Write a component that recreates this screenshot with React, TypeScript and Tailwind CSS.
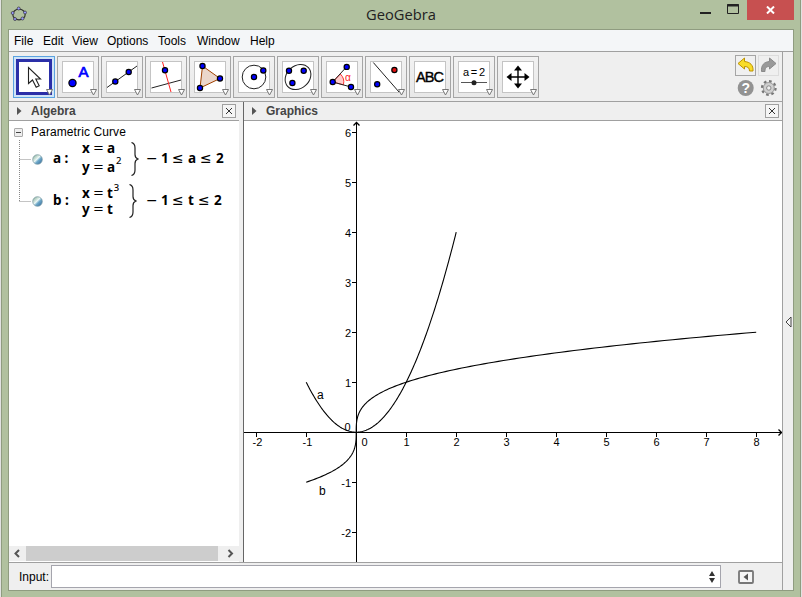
import type { ReactNode } from "react";

const menus = [
  { label: "File", width: "w-[29px]" },
  { label: "Edit", width: "w-[29px]" },
  { label: "View", width: "w-[35px]" },
  { label: "Options", width: "w-[51px]" },
  { label: "Tools", width: "w-[39px]" },
  { label: "Window", width: "w-[53px]" },
  { label: "Help", width: "w-[30px]" },
];

function Dot({ x, y, r = 2.6, fill = "#0000ff" }: { x: number; y: number; r?: number; fill?: string }) {
  return <circle cx={x} cy={y} r={r} fill={fill} stroke="#000" strokeWidth={1.2} />;
}

const tools: { name: string; icon: ReactNode }[] = [
  {
    name: "Move",
    icon: <path d="M15.5 11.5v16l4-3.5 3.7 7.2 3-1.5-3.4-6.7h4.7z" fill="#fff" stroke="#222" strokeWidth={1.1} />,
  },
  {
    name: "Point",
    icon: (
      <>
        <Dot x={15.5} y={27} r={3.6} />
        <text x={21.5} y={21} fontSize={15} fill="#0000ff" stroke="#0000ff" strokeWidth={0.7}>A</text>
      </>
    ),
  },
  {
    name: "Line",
    icon: (
      <>
        <path d="M6 31.500L36 10" stroke="#222" />
        <Dot x={14.3} y={25.5} />
        <Dot x={27.7} y={16} />
      </>
    ),
  },
  {
    name: "Perpendicular",
    icon: (
      <>
        <path d="M6.500 32L36 24" stroke="#222" />
        <path d="M17.500 6L26 36" stroke="#f22" />
        <Dot x={20} y={14.3} />
      </>
    ),
  },
  {
    name: "Polygon",
    icon: (
      <>
        <path d="M13.500 10L31 22.500L11 32z" fill="#ebd6cb" stroke="#a04000" />
        <Dot x={13.5} y={10} />
        <Dot x={31} y={22.5} />
        <Dot x={11} y={32} />
      </>
    ),
  },
  {
    name: "Circle",
    icon: (
      <>
        <circle cx={21} cy={21} r={11.8} fill="none" stroke="#222" />
        <Dot x={21} y={21} />
        <Dot x={30.3} y={14.5} />
      </>
    ),
  },
  {
    name: "Conic",
    icon: (
      <>
        <ellipse cx={21} cy={21} rx={14} ry={11.3} fill="none" stroke="#222" transform="rotate(-42 21 21)" />
        <Dot x={12} y={14.7} />
        <Dot x={26.7} y={14.7} />
        <Dot x={15.4} y={27} />
      </>
    ),
  },
  {
    name: "Angle",
    icon: (
      <>
        <path d="M11.700 26L19.300 18A11 11 0 0 1 22.400 28.800z" fill="#fcc" stroke="#f33" />
        <path d="M25.700 10.700L11.700 26L30 31" fill="none" stroke="#222" />
        <text x={24} y={24.5} fontSize={10} fill="#f22">α</text>
        <Dot x={11.7} y={26} />
        <Dot x={25.7} y={10.9} />
        <Dot x={30} y={31} />
      </>
    ),
  },
  {
    name: "Reflect",
    icon: (
      <>
        <path d="M8.300 6.500L34 36" stroke="#222" />
        <Dot x={29.4} y={14} fill="#e01010" />
        <Dot x={12.2} y={28.3} />
      </>
    ),
  },
  {
    name: "Text",
    icon: <text x={7} y={26} fontSize={14.5} textLength={28} stroke="#000" strokeWidth={0.4}>ABC</text>,
  },
  {
    name: "Slider",
    icon: (
      <>
        <text x={10} y={20} fontSize={11} textLength={22}>a=2</text>
        <path d="M8 26.500H34" stroke="#555" />
        <circle cx={21} cy={26.8} r={2.5} fill="#222" />
      </>
    ),
  },
  {
    name: "Move view",
    icon: (
      <>
        <path d="M21 13V29M13 21H29" stroke="#000" strokeWidth={1.4} />
        <path d="M21 9.500l4 5h-8zM21 32.500l4-5h-8zM9.500 21l5-4v8zM32.500 21l-5-4v8z" />
      </>
    ),
  },
];

function ToolButton({ icon, active }: { icon: ReactNode; active: boolean }) {
  return (
    <button
      className={
        active
          ? "h-[42px] w-[42px] border border-[#5ba3e0] bg-[#cfe4f8]"
          : "h-[42px] w-[42px] border border-[#a5a5a5] bg-linear-to-b from-[#f2f2f2] to-[#e8e8e8]"
      }
    >
      <svg width={42} height={42} viewBox="0 0 42 42" className="-m-px block font-['Liberation_Sans',sans-serif]">
        {active ? (
          <rect x={4.5} y={4.5} width={33} height={33} fill="#fff" stroke="#2b2fa8" strokeWidth={3} />
        ) : (
          <rect x={5.5} y={5.5} width={31} height={31} fill="#fff" stroke="#c4c4c4" />
        )}
        {icon}
        <path d="M33.500 33.500h6l-3 5.500z" fill="#fff" stroke="#777" />
      </svg>
    </button>
  );
}

function PanelHeader({ title }: { title: string }) {
  return (
    <div className="flex h-[19px] shrink-0 items-center border-b border-[#a0a0a0] bg-[#efefef] pr-[3px] pl-2">
      <svg width={5} height={8} viewBox="0 0 5 8">
        <path d="M0 0l4.500 4L0 8z" fill="#555" />
      </svg>
      <span className="ml-[9px] flex-1 text-[12px] leading-[18px] font-bold text-[#444]">{title}</span>
      <button className="grid h-3.5 w-3.5 place-items-center border border-[#a0a0a0] bg-[#f5f5f5]">
        <svg width={6} height={6} viewBox="0 0 6 6">
          <path d="M0 0l6 6M6 0L0 6" stroke="#333" />
        </svg>
      </button>
    </div>
  );
}

function Brace() {
  return (
    <svg width={8} height={34} viewBox="0 0 8 34" className="shrink-0">
      <path d="M0.500 0.500Q4 1.500 4 6v6.500Q4 16 7 17Q4 18 4 21.500V28Q4 32.500 0.500 33.500" fill="none" stroke="#222" strokeWidth={1.2} />
    </svg>
  );
}

function Marble() {
  return (
    <svg width={11} height={11} viewBox="0 0 11 11" className="shrink-0">
      <defs>
        <linearGradient id="marble" x1="0" y1="0" x2="1" y2="1">
          <stop offset="0.1" stopColor="#8fb5a0" />
          <stop offset="0.45" stopColor="#eaf6f4" />
          <stop offset="0.6" stopColor="#6fa9c9" />
          <stop offset="1" stopColor="#2a5f96" />
        </linearGradient>
      </defs>
      <circle cx={5.5} cy={5.5} r={4.8} fill="url(#marble)" stroke="#7797a0" strokeWidth={0.7} />
    </svg>
  );
}

function Equation({ left, right, power }: { left: string; right: string; power?: string }) {
  return (
    <span className="flex h-full items-center">
      <span className="w-[11px]">{left}</span>
      <span className="w-[14px] font-['DejaVu_Sans',sans-serif] text-[13px] font-normal">=</span>
      <span>{right}</span>
      {power && <span className="mb-[11px] ml-px text-[9.500px] font-medium">{power}</span>}
    </span>
  );
}

function Range({ name }: { name: string }) {
  const sign = "font-['DejaVu_Sans',sans-serif] text-[14px] font-normal";
  return (
    <span className="flex items-center leading-4">
      <span className={`${sign} w-[15px]`}>−</span>
      <span className="w-[11px]">1</span>
      <span className={`${sign} w-4`}>≤</span>
      <span className={name === "a" ? "w-[12px]" : "w-[10px]"}>{name}</span>
      <span className={`${sign} w-4`}>≤</span>
      <span>2</span>
    </span>
  );
}

function AlgebraPanel() {
  return (
    <section className="flex w-[230px] flex-col bg-white">
      <PanelHeader title="Algebra" />
      <div className="flex-1 pt-[3px] pl-[5px]">
        <div className="flex h-4 items-center">
          <span className="grid h-[9px] w-[9px] place-items-center rounded-[1px] border border-[#aaa] bg-[#eee]">
            <span className="h-px w-[5px] bg-[#444]" />
          </span>
          <span className="ml-2 text-[12px] leading-4 tracking-[0.1px]">Parametric Curve</span>
        </div>
        <div className="flex font-['Noto_Sans',sans-serif] text-[13.500px] leading-4 font-bold">
          <svg width={13} height={70} viewBox="0 0 13 70" className="ml-[5px] shrink-0">
            <path d="M0.500 0V61.500M0.500 19.500H12M0.500 61.500H12" fill="none" stroke="#888" strokeDasharray="1 1" />
          </svg>
          <div>
            <div className="flex h-[37px] items-center pt-px">
              <Marble />
              <span className="ml-[10px] w-[29px] pb-[3px] whitespace-nowrap">a :</span>
              <div className="grid w-[49px] grid-rows-[19px_19px] pb-1">
                <Equation left="x" right="a" />
                <Equation left="y" right="a" power="2" />
              </div>
              <Brace />
              <div className="ml-[7px] pb-[3px]">
                <Range name="a" />
              </div>
            </div>
            <div className="mt-[5px] flex h-[37px] items-center pt-px">
              <Marble />
              <span className="ml-[10px] w-[29px] pb-[3px] whitespace-nowrap">b :</span>
              <div className="grid w-[47px] grid-rows-[16px_16px]">
                <Equation left="x" right="t" power="3" />
                <Equation left="y" right="t" />
              </div>
              <Brace />
              <div className="ml-[9px] pb-[3px]">
                <Range name="t" />
              </div>
            </div>
          </div>
        </div>
      </div>
      <div className="mb-px flex h-[15px] items-center bg-[#efefef]">
        <svg width={17} height={15} viewBox="0 0 17 15">
          <path d="M10 4L6.500 7.500L10 11" fill="none" stroke="#555" strokeWidth={2} />
        </svg>
        <div className="h-[15px] w-48 bg-[#cdcdcd]" />
        <svg width={21} height={15} viewBox="0 0 21 15">
          <path d="M10.500 4L14 7.500L10.500 11" fill="none" stroke="#555" strokeWidth={2} />
        </svg>
      </div>
    </section>
  );
}

const ORIGIN_X = 112.5;
const ORIGIN_Y = 311.5;
const UNIT = 50;

// SVG points of a parametric curve over [-1, 2]
function curve(fx: (t: number) => number, fy: (t: number) => number) {
  const points: string[] = [];
  for (let i = 0; i <= 180; i++) {
    const t = -1 + i / 60;
    points.push(`${(ORIGIN_X - 0.3 + fx(t) * UNIT).toFixed(2)},${(ORIGIN_Y - 0.3 - fy(t) * UNIT).toFixed(2)}`);
  }
  return points.join(" ");
}

const xTicks = [-2, -1, 1, 2, 3, 4, 5, 6, 7, 8];
const yTicks = [-2, -1, 1, 2, 3, 4, 5, 6];

function GraphicsPanel() {
  return (
    <section className="flex flex-1 flex-col bg-white">
      <PanelHeader title="Graphics" />
      <svg width={538} height={441} viewBox="0 0 538 441" className="block font-['Liberation_Sans',sans-serif]">
        <g stroke="#000" fill="none">
          <path d="M0 311.500H537M112.500 2V441" />
          <path d="M109.500 4.500L112.500 1.500L115.500 4.500M534.500 308.500L537.500 311.500L534.500 314.500" strokeWidth={1.3} />
          {xTicks.map((n) => (
            <path key={n} d={`M${ORIGIN_X + n * UNIT} 312v4`} />
          ))}
          {yTicks.map((n) => (
            <path key={n} d={`M112 ${ORIGIN_Y - n * UNIT}h-4`} />
          ))}
          <polyline points={curve((t) => t, (t) => t * t)} strokeWidth={1.1} />
          <polyline points={curve((t) => t ** 3, (t) => t)} strokeWidth={1.1} />
        </g>
        <g fontSize={11}>
          {xTicks.map((n) => (
            <text key={n} x={ORIGIN_X + n * UNIT + (n < 0 ? 1 : 0)} y={325} textAnchor="middle">{n}</text>
          ))}
          {yTicks.map((n) => (
            <text key={n} x={107} y={ORIGIN_Y - n * UNIT + 4} textAnchor="end">{n}</text>
          ))}
          <text x={117.5} y={325}>0</text>
          <text x={100.5} y={309.5}>0</text>
        </g>
        <g fontSize={12}>
          <text x={73} y={278}>a</text>
          <text x={75} y={374}>b</text>
        </g>
      </svg>
    </section>
  );
}

function CornerButtons() {
  return (
    <div className="mt-[3px] mr-[3px] grid h-11 grid-cols-[21px_21px] grid-rows-[21px_21px] gap-x-0.5 gap-y-px">
      <button className="border border-[#a5a5a5] bg-[#f0f0f0]">
        <svg width={19} height={19} viewBox="0 0 19 19">
          <path d="M2 7.500L8.500 2v3.500C14 6 17.500 9 17 15h-3.500c0-3-1.500-4.500-5-4.500V13z" fill="#f8dc28" stroke="#bd9200" />
        </svg>
      </button>
      <button className="border border-[#dcdcdc] bg-[#efefef]">
        <svg width={19} height={19} viewBox="0 0 19 19">
          <path d="M17 7.500L10.500 2v3.500C5 6 2 9 2.500 15.500H6c0-3.500 1-5 4.500-5V13z" fill="#999" stroke="#8a8a8a" />
        </svg>
      </button>
      <svg width={21} height={21} viewBox="0 0 21 21" className="font-['Liberation_Sans',sans-serif]">
        <circle cx={10.7} cy={11} r={8} fill="#929292" />
        <text x={10.7} y={16} fontSize={14} fontWeight="bold" textAnchor="middle" fill="#fff">?</text>
      </svg>
      <svg width={21} height={21} viewBox="0 0 21 21">
        <circle cx={10.800} cy={11} r={6.7} fill="none" stroke="#777" strokeWidth={2.4} strokeDasharray="2.63 2.63" />
        <circle cx={10.800} cy={11} r={5.5} fill="#cfcfcf" stroke="#999" />
        <circle cx={10.800} cy={11} r={2.2} fill="#efefef" stroke="#8a8a8a" />
      </svg>
    </div>
  );
}

function TitleBar() {
  return (
    <header className="flex h-[29px]">
      <svg width={18} height={18} viewBox="0 0 18 18" className="mt-[5px] ml-2">
        <ellipse cx={9} cy={9.5} rx={6.2} ry={5.3} fill="none" stroke="#333" strokeWidth={1.2} />
        {[[8.700, 3.500], [15, 7.500], [12.500, 13.500], [5, 14], [2.700, 8]].map(([x, y]) => (
          <circle key={x} cx={x} cy={y} r={1.5} fill="#9999ff" stroke="#333" strokeWidth={0.7} />
        ))}
      </svg>
      <h1 className="flex-1 pl-[338px] font-['Open_Sans',sans-serif] text-[14.700px] leading-[29px] text-[#222]">GeoGebra</h1>
      <div className="flex">
        <svg width={52} height={20} viewBox="0 0 52 20">
          <path d="M5 13H16" stroke="#222" strokeWidth={2} />
          <path d="M32.500 4.500h11v9h-11z" fill="none" stroke="#222" />
          <path d="M32 5.500h12" stroke="#222" strokeWidth={2} />
        </svg>
        <button className="grid h-5 w-[47px] place-items-center bg-[#c75050]">
          <svg width={9} height={8} viewBox="0 0 9 8">
            <path d="M1 0.500l7 7M8 0.500l-7 7" stroke="#fff" strokeWidth={2} />
          </svg>
        </button>
        <div className="w-[6px]" />
      </div>
    </header>
  );
}

export default function App() {
  return (
    <div className="h-[597px] w-[802px] overflow-hidden bg-[#e2e2e2] pr-px pl-px font-['Liberation_Sans',sans-serif] text-black">
      <div className="h-full border-x border-[#8f9c80] bg-[#b1c19f]">
        <TitleBar />
        <div className="mr-[6px] ml-[6px] h-[562px] border border-[#8f9c80] bg-[#efefef]">
          <nav className="flex h-[22px] items-center border-b border-[#a0a0a0] bg-[#f4f6f8] pl-[5px] text-[12px]">
            {menus.map((menu) => (
              <span key={menu.label} className={menu.width}>{menu.label}</span>
            ))}
          </nav>
          <div className="flex h-[538px]">
            <div className="flex w-[773px] flex-col">
              <div className="flex h-[50px] shrink-0 justify-between border-b border-[#a0a0a0] bg-[#efefef]">
                <div className="flex gap-0.5 pt-1 pl-1">
                  {tools.map((tool, i) => (
                    <ToolButton key={tool.name} icon={tool.icon} active={i === 0} />
                  ))}
                </div>
                <CornerButtons />
              </div>
              <main className="flex h-[460px] shrink-0">
                <AlgebraPanel />
                <div className="w-[5px] border-r border-[#666] bg-[#efefef]" />
                <GraphicsPanel />
              </main>
              <footer className="flex h-7 items-center border-t border-[#a0a0a0] pl-2.5">
                <label className="w-8 text-[12px] whitespace-nowrap">Input:</label>
                <div className="flex h-[23px] w-[670px] items-center justify-end border border-[#a5a5ad] bg-white pr-[5px]">
                  <svg width={6} height={12} viewBox="0 0 6 12">
                    <path d="M3 0l3 5H0zM3 12l3-5H0z" fill="#333" />
                  </svg>
                </div>
                <svg width={16} height={14} viewBox="0 0 16 14" className="ml-[17px]">
                  <rect x={1} y={1} width={14} height={12} rx={1} fill="#f5f5f5" stroke="#777" strokeWidth={1.800} />
                  <path d="M10 3.500v7L5.500 7z" fill="#555" />
                </svg>
              </footer>
            </div>
            <aside className="flex flex-1 justify-center border-l border-[#a0a0a0] pt-[264px]">
              <svg width={7} height={12} viewBox="0 0 7 12">
                <path d="M6 1v10L1 6z" fill="#f5f5f5" stroke="#444" />
              </svg>
            </aside>
          </div>
        </div>
      </div>
    </div>
  );
}
